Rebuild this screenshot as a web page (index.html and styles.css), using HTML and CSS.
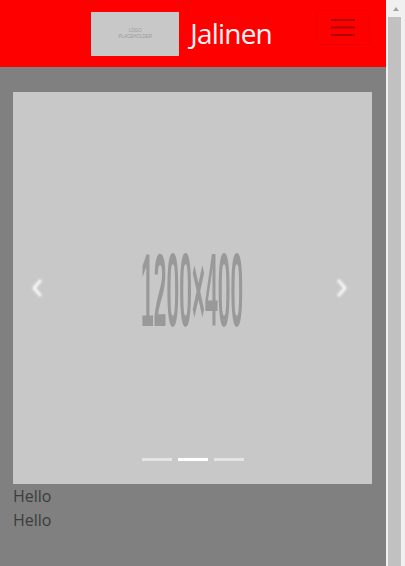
FILE: index.html
```html
<!DOCTYPE html>
<html lang="en">
<head>
<meta charset="utf-8">
<title>Jalinen</title>
<link rel="stylesheet" href="styles.css">
</head>
<body>
<div class="page">
  <header class="navbar">
    <div class="brand">
      <div class="logo"><span>LOGO</span><span>PLACEHOLDER</span></div>
      <span class="brand-name">Jalinen</span>
    </div>
    <button class="toggler" aria-label="Menu">
      <svg class="toggler-icon" viewBox="0 0 24 17" width="24" height="17">
        <path d="M0 1h24M0 8.5h24M0 16h24" stroke="#b00000" stroke-width="2" fill="none"/>
      </svg>
    </button>
  </header>
  <main class="main">
    <div class="carousel">
      <div class="slide-text">1200×400</div>
      <a class="control control-prev" href="#">
        <svg width="12" height="18" viewBox="0 0 12 18"><path d="M9 2 L3 9 L9 16" stroke="#fff" stroke-width="3.2" fill="none" stroke-linecap="round" stroke-linejoin="round"/></svg>
      </a>
      <a class="control control-next" href="#">
        <svg width="12" height="18" viewBox="0 0 12 18"><path d="M3 2 L9 9 L3 16" stroke="#fff" stroke-width="3.2" fill="none" stroke-linecap="round" stroke-linejoin="round"/></svg>
      </a>
      <ol class="indicators">
        <li></li>
        <li class="active"></li>
        <li></li>
      </ol>
    </div>
    <div class="content">
      <p>Hello</p>
      <p>Hello</p>
    </div>
  </main>
</div>
<div class="scrollbar">
  <div class="sb-up"><span class="sb-arrow"></span></div>
  <div class="sb-thumb"></div>
</div>
</body>
</html>
```
FILE: styles.css
```css
html, body {
  margin: 0;
  padding: 0;
  height: 566px;
  overflow: hidden;
}
body {
  display: flex;
  font-family: "Open Sans", "Noto Sans", sans-serif;
  background: #808080;
}
.page {
  flex: 0 0 386px;
  background: #808080;
  height: 566px;
}
.navbar {
  height: 67px;
  box-sizing: border-box;
  background: #ff0000;
  display: flex;
  justify-content: flex-end;
  align-items: flex-start;
  padding: 10px 16px 0 0;
}
.brand {
  display: flex;
  align-items: flex-start;
  gap: 11px;
}
.logo {
  width: 88px;
  height: 44px;
  margin-top: 2px;
  background: #c8c8c8;
  display: flex;
  flex-direction: column;
  align-items: center;
  justify-content: center;
  font-family: "Liberation Sans", sans-serif;
  font-size: 4.5px;
  line-height: 6px;
  color: #9a9a9a;
}
.brand-name {
  color: #fff4f4;
  font-size: 28px;
  line-height: 34px;
  letter-spacing: -0.8px;
  margin-top: 6px;
}
.toggler {
  width: 54px;
  height: 35px;
  margin-left: 44px;
  padding: 0;
  background: transparent;
  border: 1px solid rgba(0, 0, 0, 0.05);
  border-radius: 3px;
  display: flex;
  align-items: center;
  justify-content: center;
}
.toggler-icon {
  display: block;
}
.main {
  padding-top: 25px;
}
.carousel {
  position: relative;
  margin: 0 14px 0 13px;
  height: 392px;
  background: #c8c8c8;
  display: flex;
  align-items: center;
  justify-content: center;
  overflow: hidden;
}
.slide-text {
  font-family: "Liberation Sans", sans-serif;
  font-weight: bold;
  font-size: 34px;
  line-height: 34px;
  color: #999;
  transform: scale(0.67, 3.05);
  margin-top: 2px;
  white-space: nowrap;
}
.control {
  position: absolute;
  top: 0;
  bottom: 0;
  display: flex;
  align-items: center;
  justify-content: center;
  opacity: 0.85;
}
.control svg {
  filter: blur(0.8px);
}
.control-prev {
  left: 0;
  width: 48px;
}
.control-next {
  right: 0;
  width: 60px;
}
.indicators {
  position: absolute;
  left: 0;
  right: 0;
  bottom: 23px;
  margin: 0;
  padding: 0;
  list-style: none;
  display: flex;
  justify-content: center;
  gap: 6px;
}
.indicators li {
  width: 30px;
  height: 3px;
  background: rgba(255, 255, 255, 0.5);
}
.indicators li.active {
  background: #fff;
}
.content {
  padding-left: 13px;
  color: #3c3c3c;
  font-size: 16px;
  line-height: 24px;
}
.content p {
  margin: 0;
}
.scrollbar {
  flex: 0 0 19px;
  height: 566px;
  background: #f0f0f0;
  display: flex;
  flex-direction: column;
  padding-left: 2px;
  box-sizing: border-box;
}
.sb-up {
  height: 17px;
  display: flex;
  align-items: center;
  justify-content: center;
  width: 15px;
}
.sb-arrow {
  width: 0;
  height: 0;
  border-left: 3.5px solid transparent;
  border-right: 3.5px solid transparent;
  border-bottom: 4px solid #a3a3a3;
}
.sb-thumb {
  flex: 1;
  width: 13px;
  background: #c1c1c1;
}
```
